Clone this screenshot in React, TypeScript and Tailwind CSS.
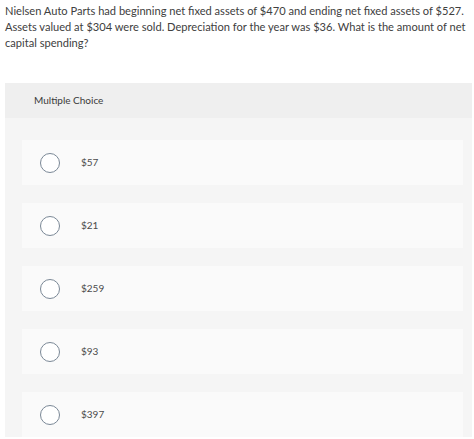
import React from "react";

const options = ["$57", "$21", "$259", "$93", "$397"];

export default function App() {
  return (
    <div
      className="w-[474px] h-[439px] overflow-hidden bg-white text-[#404040]"
      style={{ fontFamily: "Lato, 'Liberation Sans', sans-serif" }}
    >
      <p className="pl-[5px] pt-[3px] text-[11.1px] leading-[16px] whitespace-nowrap">
        Nielsen Auto Parts had beginning net fixed assets of $470 and ending net fixed assets of $527.
        <br />
        Assets valued at $304 were sold. Depreciation for the year was $36. What is the amount of net
        <br />
        capital spending?
      </p>
      <div className="ml-[5px] mr-[2px] mt-[32px] bg-[#f5f5f5]">
        <div className="h-[35px] bg-[#efefef] pl-[29px] flex items-center text-[10px] text-[#3a3a3a]">
          Multiple Choice
        </div>
        <div className="pl-[17px] pr-[9px] pt-[22px] flex flex-col gap-[18px]">
          {options.map((o) => (
            <div key={o} className="h-[45px] bg-[#fafafa] flex items-center">
              <div className="ml-[18px] w-[20px] h-[20px] rounded-full border border-[#7a8896] bg-white" />
              <span className="ml-[21px] text-[10px] text-[#4a4a4a]">{o}</span>
            </div>
          ))}
        </div>
      </div>
    </div>
  );
}
